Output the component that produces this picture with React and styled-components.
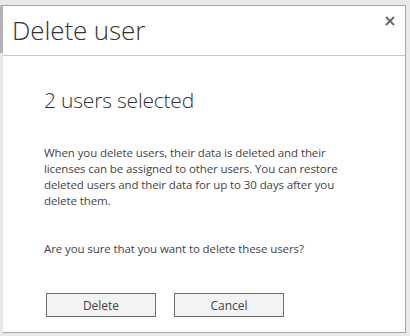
import styled, { createGlobalStyle } from "styled-components"

const GlobalStyle = createGlobalStyle`
	html, body {
		margin: 0;
		padding: 0;
		background: #e9e9e9;
		font-family: "Open Sans", "Noto Sans", sans-serif;
	}
`

const Page = styled.div`
	display: flex;
	width: 410px;
	height: 336px;
	padding: 5px 4px 3px 0;
	box-sizing: border-box;
`

const Gutter = styled.div`
	width: 3px;
	display: flex;
	flex-direction: column;
`

const GutterTop = styled.div`
	height: 48px;
	background: #b4b4b4;
`

const Dialog = styled.div`
	flex: 1;
	display: flex;
	flex-direction: column;
	background: #fff;
	border: 1px solid #a8a8a8;
	border-left: none;
	box-sizing: border-box;
`

const Header = styled.div`
	height: 49px;
	display: flex;
	align-items: center;
	justify-content: space-between;
	padding: 0 10px 0 9px;
	border-bottom: 1px solid #c8c8c8;
`

const Title = styled.h1`
	margin: 0;
	font-weight: 300;
	font-size: 26px;
	color: #333;
	letter-spacing: -0.1px;
	padding-bottom: 2px;
`

const Close = styled.button`
	align-self: flex-start;
	margin-top: 10px;
	padding: 0;
	border: none;
	background: none;
	width: 10px;
	height: 10px;
	display: flex;
`

const Body = styled.div`
	flex: 1;
	display: flex;
	flex-direction: column;
	padding: 30px 0 0 41px;
`

const Heading = styled.h2`
	margin: 0;
	font-weight: 300;
	font-size: 21px;
	color: #333;
	letter-spacing: -0.2px;
`

const Text = styled.p`
	margin: ${(p) => p.margin};
	font-size: 11.5px;
	line-height: 16px;
	color: #444;
	letter-spacing: -0.1px;
`

const Actions = styled.div`
	display: flex;
	gap: 18px;
	margin: 36px 0 0 2px;
`

const Button = styled.button`
	width: 110px;
	height: 24px;
	background: #f3f3f3;
	border: 1px solid #6e6e6e;
	font-family: inherit;
	font-size: 12px;
	color: #444;
	padding: 0;
`

export default function App() {
	return (
		<>
			<GlobalStyle />
			<Page>
				<Gutter>
					<GutterTop />
				</Gutter>
				<Dialog>
					<Header>
						<Title>Delete user</Title>
						<Close aria-label="Close">
							<svg width="10" height="10" viewBox="0 0 10 10">
								<path d="M1 1L9 9M9 1L1 9" stroke="#666" strokeWidth="1.8" />
							</svg>
						</Close>
					</Header>
					<Body>
						<Heading>2 users selected</Heading>
						<Text margin="31px 0 0">
							When you delete users, their data is deleted and their
							<br />
							licenses can be assigned to other users. You can restore
							<br />
							deleted users and their data for up to 30 days after you
							<br />
							delete them.
						</Text>
						<Text margin="32px 0 0">Are you sure that you want to delete these users?</Text>
						<Actions>
							<Button>Delete</Button>
							<Button>Cancel</Button>
						</Actions>
					</Body>
				</Dialog>
			</Page>
		</>
	)
}
